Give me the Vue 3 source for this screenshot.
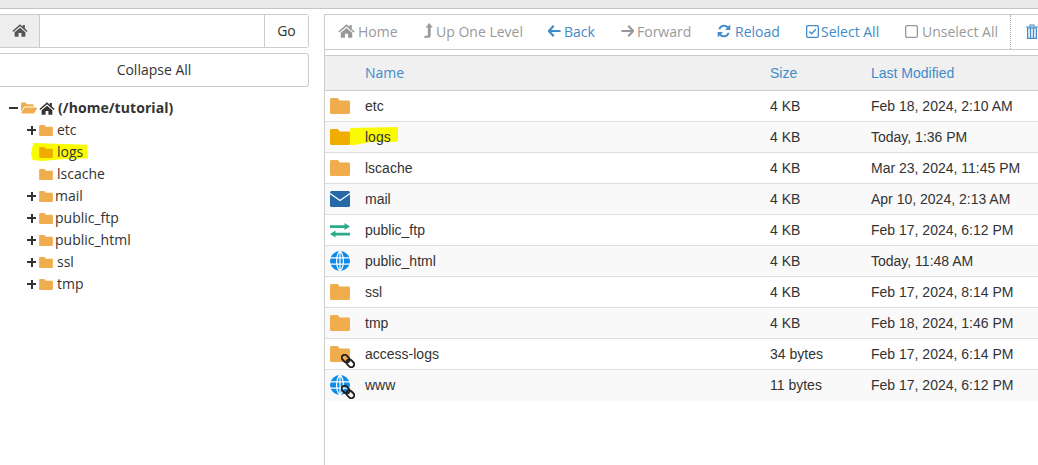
<script setup>
const tree = [
  { name: 'etc', plus: true },
  { name: 'logs', hl: true },
  { name: 'lscache' },
  { name: 'mail', plus: true, tight: true },
  { name: 'public_ftp', plus: true, tight: true },
  { name: 'public_html', plus: true, tight: true },
  { name: 'ssl', plus: true },
  { name: 'tmp', plus: true },
]
const tools = [
  { label: 'Home', icon: 'home', off: true, w: 85 },
  { label: 'Up One Level', icon: 'up', off: true, w: 125 },
  { label: 'Back', icon: 'back', w: 73 },
  { label: 'Forward', icon: 'fwd', off: true, w: 96 },
  { label: 'Reload', icon: 'reload', w: 88 },
  { label: 'Select All', icon: 'check', w: 100 },
  { label: 'Unselect All', icon: 'box', off: true, w: 105 },
]
const files = [
  { name: 'etc', icon: 'folder', size: '4 KB', date: 'Feb 18, 2024, 2:10 AM' },
  { name: 'logs', icon: 'folder', size: '4 KB', date: 'Today, 1:36 PM', hl: true },
  { name: 'lscache', icon: 'folder', size: '4 KB', date: 'Mar 23, 2024, 11:45 PM' },
  { name: 'mail', icon: 'mail', size: '4 KB', date: 'Apr 10, 2024, 2:13 AM' },
  { name: 'public_ftp', icon: 'ftp', size: '4 KB', date: 'Feb 17, 2024, 6:12 PM' },
  { name: 'public_html', icon: 'globe', size: '4 KB', date: 'Today, 11:48 AM' },
  { name: 'ssl', icon: 'folder', size: '4 KB', date: 'Feb 17, 2024, 8:14 PM' },
  { name: 'tmp', icon: 'folder', size: '4 KB', date: 'Feb 18, 2024, 1:46 PM' },
  { name: 'access-logs', icon: 'folder', size: '34 bytes', date: 'Feb 17, 2024, 6:14 PM', link: true },
  { name: 'www', icon: 'globe', size: '11 bytes', date: 'Feb 17, 2024, 6:12 PM', link: true },
]
</script>

<template>
  <div class="page">
    <svg class="defs" aria-hidden="true">
      <symbol id="home" viewBox="0 0 24 20">
        <path d="M12 0.5 0.3 10.6l1.5 1.7L12 3.6l10.2 8.700 1.500-1.700L19.500 7V1.500h-3.200v2.700z" fill="currentColor" />
        <path d="M12 5.600 3.800 12.500V19.500h6v-5.700h4.400v5.700h6v-7z" fill="currentColor" />
      </symbol>
      <symbol id="folder" viewBox="0 0 20 16">
        <path d="M1.500 0h5.300C7.800 0 8.300.5 8.800 1.200L9.700 2.600H18.500c.8 0 1.500.7 1.500 1.500v10.400c0 .8-.7 1.500-1.500 1.500H1.500C.7 16 0 15.300 0 14.500V1.500C0 .7.700 0 1.500 0z" fill="currentColor" />
      </symbol>
      <symbol id="folder-open" viewBox="0 0 22 16">
        <path d="M0 13V2c0-.8.600-1.500 1.400-1.500h4.200c.7 0 1.100.4 1.500 1L7.800 3h8.400c.8 0 1.300.5 1.300 1.300V6H5.500C4.500 6 3.900 6.400 3.400 7.200z" fill="currentColor" />
        <path d="M5.500 7.200H21c.8 0 1.200.7.800 1.400l-3.200 6.100c-.4.700-.9 1-1.700 1H1.500c-.8 0-1.200-.7-.8-1.400L3.900 8.200c.4-.7.900-1 1.600-1z" fill="currentColor" />
      </symbol>
      <symbol id="up" viewBox="0 0 12 20">
        <path d="M7.500 0 12 5.500H9.300V16c0 1.400-.9 2.300-2.300 2.300H0.400L2.300 16h3.500V5.500H3z" fill="currentColor" />
      </symbol>
      <symbol id="back" viewBox="0 0 16 14">
        <path d="M7 .5 1 7l6 6.500M1.500 7H15.500" fill="none" stroke="currentColor" stroke-width="2.600" />
      </symbol>
      <symbol id="fwd" viewBox="0 0 16 14">
        <path d="M9 .5 15 7l-6 6.500M14.500 7H.5" fill="none" stroke="currentColor" stroke-width="2.600" />
      </symbol>
      <symbol id="reload" viewBox="0 0 16 16">
        <path d="M2.300 6.200A6 6 0 0 1 12.400 3.500L14.300 1.600V6.900H9L11 4.900A4 4 0 0 0 4.400 6.200zM13.700 9.800A6 6 0 0 1 3.600 12.500L1.700 14.400V9.100H7L5 11.100A4 4 0 0 0 11.600 9.800z" fill="currentColor" />
      </symbol>
      <symbol id="check" viewBox="0 0 14 14">
        <rect x=".7" y=".7" width="12.600" height="12.600" rx="1.500" fill="none" stroke="currentColor" stroke-width="1.400" />
        <path d="M3.500 7 6 9.500 10.500 4.500" fill="none" stroke="currentColor" stroke-width="1.500" />
      </symbol>
      <symbol id="box" viewBox="0 0 14 14">
        <rect x=".7" y=".7" width="12.600" height="12.600" rx="1.500" fill="none" stroke="currentColor" stroke-width="1.400" />
      </symbol>
      <symbol id="trash" viewBox="0 0 12 15">
        <path d="M0 2.500h12v1.100H0zM3.500 2.500V.4h5v2.100h-1V1.400h-3v1.100z" fill="currentColor" />
        <path d="M1 3.600h10V15H1zM2.300 4.500v9.300h1.500V4.500zM5.200 4.500v9.300h1.600V4.500zM8.200 4.500v9.300h1.500V4.500z" fill="currentColor" fill-rule="evenodd" />
      </symbol>
      <symbol id="mail" viewBox="0 0 20 16">
        <rect width="20" height="16" rx="1.500" fill="#2568a8" />
        <path d="M0 2.500 10 9.500 20 2.500" fill="none" stroke="#fff" stroke-width="1.300" />
      </symbol>
      <symbol id="ftp" viewBox="0 0 20 15">
        <path d="M0 2.200h14.500V0L20 3.500 14.500 7V4.900H0z" fill="#2bab8b" />
        <path d="M20 9.700H5.500V7.500L0 11l5.500 3.500v-2.100H20z" fill="#2bab8b" />
      </symbol>
      <symbol id="globe" viewBox="0 0 20 20">
        <circle cx="10" cy="10" r="10" fill="#0d8be8" />
        <path d="M0 6.900h20M0 13.100h20M10 0v20M10 0C5.500 4 5.500 16 10 20M10 0c4.500 4 4.500 16 0 20" fill="none" stroke="#fff" stroke-width="1.200" />
      </symbol>
      <symbol id="link" viewBox="0 0 14 14">
        <g fill="none" stroke="#1c1c1c" stroke-width="1.800">
          <rect x="-4.300" y="-2.900" width="8.600" height="5.800" rx="2.900" transform="translate(4.700 4.700) rotate(45)" />
          <rect x="-4.300" y="-2.900" width="8.600" height="5.800" rx="2.900" transform="translate(9.300 9.300) rotate(45)" />
        </g>
      </symbol>
    </svg>

    <div class="topbar"></div>

    <div class="main">
      <aside class="side">
        <div class="pathbar">
          <button class="homebtn"><svg class="i-home"><use href="#home" /></svg></button>
          <input class="pathinput" type="text" />
          <button class="gobtn">Go</button>
        </div>
        <button class="collapse">Collapse All</button>

        <div class="tree">
          <div class="root">
            <span class="minus"></span>
            <svg class="i-open"><use href="#folder-open" /></svg>
            <svg class="i-roothome"><use href="#home" /></svg>
            <span class="rootlabel">(/home/tutorial)</span>
          </div>
          <div v-for="t in tree" :key="t.name" class="node" :class="{ hl: t.hl }">
            <span class="plus" :class="{ blank: !t.plus }"></span>
            <svg class="i-tree"><use href="#folder" /></svg>
            <span class="tname" :class="{ tight: t.tight }">{{ t.name }}</span>
            <span v-if="t.hl" class="marker tree-marker"></span>
          </div>
        </div>
      </aside>

      <section class="content">
        <div class="toolbar">
          <div
            v-for="b in tools"
            :key="b.label"
            class="tool"
            :class="{ off: b.off }"
            :style="{ width: b.w + 'px' }"
          >
            <svg class="tool-icon" :class="'ti-' + b.icon"><use :href="'#' + b.icon" /></svg>
            <span>{{ b.label }}</span>
          </div>
          <div class="sep"></div>
          <svg class="i-trash"><use href="#trash" /></svg>
        </div>

        <div class="table">
          <div class="row head">
            <span></span>
            <span class="col-name">Name</span>
            <span>Size</span>
            <span>Last Modified</span>
          </div>
          <div v-for="f in files" :key="f.name" class="row body" :class="{ hlrow: f.hl }">
            <span class="cell-icon">
              <svg class="f-icon" :class="'fi-' + f.icon"><use :href="'#' + f.icon" /></svg>
              <svg v-if="f.link" class="i-link"><use href="#link" /></svg>
              <span v-if="f.hl" class="marker row-marker"></span>
            </span>
            <span class="name">{{ f.name }}</span>
            <span>{{ f.size }}</span>
            <span>{{ f.date }}</span>
          </div>
        </div>
      </section>
    </div>
  </div>
</template>

<style>
html, body { margin: 0; background: #fff; overflow: hidden; }
</style>

<style scoped>
.page {
  width: 1038px;
  height: 465px;
  overflow: hidden;
  background: #fff;
  font-family: "Open Sans", sans-serif;
  color: #333;
}
.defs { position: absolute; width: 0; height: 0; }
.topbar {
  height: 8px;
  background: #e9e9e9;
  border-bottom: 1px solid #c4c4c4;
}
.main {
  display: flex;
  padding-top: 5px;
  height: 451px;
}
.side {
  width: 309px;
  flex: none;
  margin-right: 15px;
}
.pathbar {
  display: flex;
  height: 32px;
  border: 1px solid #ccc;
  border-left: 0;
  border-radius: 0 3px 3px 0;
  box-sizing: content-box;
}
.homebtn {
  width: 40px;
  padding: 0 0 1px;
  border: 0;
  border-right: 1px solid #ccc;
  background: #eee;
  color: #555;
  display: flex;
  align-items: center;
  justify-content: center;
}
.i-home { width: 16px; height: 13px; }
.pathinput {
  flex: 1;
  min-width: 0;
  border: 0;
  padding: 0;
  background: #fff;
}
.gobtn {
  width: 44px;
  padding: 0 0 2px;
  border: 0;
  border-left: 1px solid #ccc;
  background: #fff;
  font: 14px "Open Sans", sans-serif;
  color: #333;
}
.collapse {
  display: block;
  box-sizing: border-box;
  width: 309px;
  height: 34px;
  margin-top: 5px;
  border: 1px solid #ccc;
  border-left: 0;
  border-radius: 0 3px 3px 0;
  background: #fff;
  font: 14px "Open Sans", sans-serif;
  color: #333;
  padding: 0 0 2px;
}
.tree {
  margin-top: 10px;
  padding-left: 9px;
  font-size: 14px;
  line-height: 22px;
}
.root {
  display: flex;
  align-items: center;
  height: 22px;
  font-weight: 700;
}
.rootlabel { letter-spacing: 0.06px; }
.minus {
  width: 9px;
  height: 2px;
  background: #333;
  margin-right: 3px;
}
.i-open { width: 16px; height: 12px; color: #f0ad4e; margin-right: 2px; }
.i-roothome { width: 16px; height: 13px; color: #333; margin-right: 3px; }
.node {
  position: relative;
  display: flex;
  align-items: center;
  height: 22px;
  padding-left: 18px;
}
.plus {
  position: relative;
  width: 9px;
  height: 9px;
  margin-right: 3px;
  flex: none;
}
.plus::before, .plus::after {
  content: "";
  position: absolute;
  background: #333;
}
.plus::before { left: 0; right: 0; top: 3.500px; height: 2px; }
.plus::after { top: 0; bottom: 0; left: 3.500px; width: 2px; }
.plus.blank::before, .plus.blank::after { display: none; }
.i-tree { width: 14px; height: 11px; color: #f0ad4e; flex: none; margin-right: 4px; position: relative; z-index: 1; }
.tname { position: relative; z-index: 1; }
.tname.tight { margin-left: -2px; }
.hl .i-tree { color: #f0ad00; }
.marker {
  position: absolute;
  background: #fbfb00;
}
.tree-marker {
  left: 22px;
  top: 2px;
  width: 57px;
  height: 18px;
  clip-path: polygon(4% 0, 98% 10%, 100% 85%, 55% 90%, 20% 100%, 3% 95%, 0 60%);
}
.content {
  flex: 1;
  min-width: 0;
  border-left: 1px solid #ccc;
}
.toolbar {
  display: flex;
  align-items: center;
  height: 32px;
  padding: 0 0 2px 13px;
  border-top: 1px solid #ccc;
  border-bottom: 1px solid #ccc;
  font-size: 14px;
  color: #428bca;
  white-space: nowrap;
}
.tool {
  flex: none;
  display: flex;
  align-items: center;
  box-sizing: border-box;
}
.tool.off { color: #999; }
.tool-icon { flex: none; margin-right: 3px; }
.ti-home { width: 17px; height: 14px; }
.ti-up { width: 10px; height: 16px; margin-right: 3px; margin-left: 0; }
.ti-back { width: 13px; height: 12px; margin-right: 3px; }
.ti-fwd { width: 13px; height: 12px; margin-right: 3px; }
.ti-reload { width: 16px; height: 16px; margin-right: 3px; margin-left: -1px; }
.ti-check { width: 13px; height: 13px; margin-right: 2px; margin-left: 1px; }
.ti-box { width: 13px; height: 13px; margin-right: 4px; margin-left: 0; }
.sep {
  align-self: stretch;
  border-left: 1px dotted #aaa;
  margin: 0 15px -2px 0;
}
.i-trash { width: 12px; height: 15px; flex: none; }
.table { margin-top: 5px; border-top: 1px solid #ccc; font-family: "Liberation Sans", sans-serif; font-size: 14px; }
.row {
  display: grid;
  grid-template-columns: 40px 405px 101px 1fr;
  align-items: center;
  box-sizing: border-box;
}
.head {
  height: 35px;
  background: #f0f0f0;
  color: #428bca;
  border-bottom: 1px solid #ccc;
}
.col-name { font-family: "Open Sans", sans-serif; padding-bottom: 2px; }
.body {
  height: 31px;
  border-bottom: 1px solid #ddd;
  color: #333;
}
.body:nth-child(odd) { background: #f9f9f9; }
.body:last-child { border-bottom: 0; padding-bottom: 1px; }
.cell-icon {
  position: relative;
  height: 24px;
  display: flex;
  align-items: center;
}
.f-icon { width: 20px; height: 16px; margin-left: 5px; position: relative; z-index: 1; color: #f0ad4e; }
.fi-globe { width: 20px; height: 20px; }
.fi-ftp { height: 15px; }
.hlrow .f-icon { color: #f0ad00; }
.i-link { position: absolute; z-index: 2; left: 16px; top: 12px; width: 14px; height: 14px; }
.row-marker {
  left: 5px;
  top: 2px;
  width: 68px;
  height: 18px;
  z-index: 0;
  clip-path: polygon(30% 6%, 100% 0, 100% 82%, 60% 84%, 36% 100%, 3% 100%, 0 80%, 28% 78%);
}
.name { position: relative; z-index: 1; }
</style>
